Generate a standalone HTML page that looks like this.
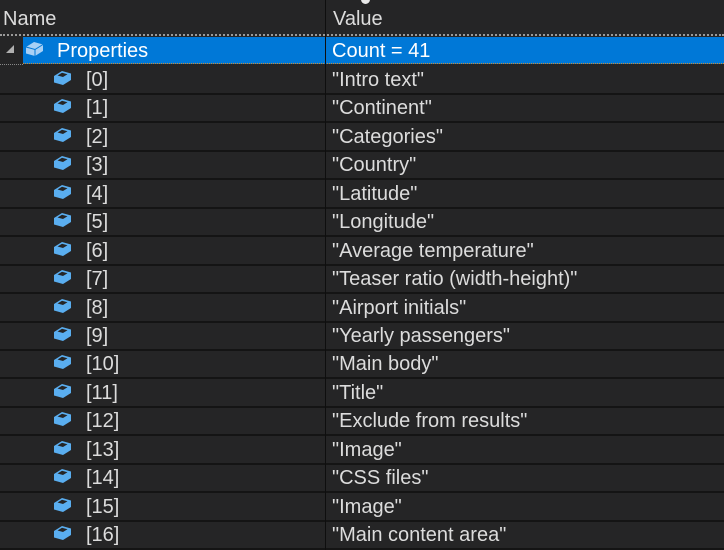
<!DOCTYPE html>
<html><head><style>
body{margin:0;width:724px;height:550px;background:#252526;overflow:hidden;position:relative;font-family:"Liberation Sans",sans-serif;font-size:20px;color:#dcdcdc}
.r{position:absolute;left:0;width:724px;height:27px;border-bottom:2px solid #141414}
.t{position:absolute;top:3px;white-space:nowrap}
.n{left:86px}.v{left:332px}
.ic{position:absolute;left:52px;top:3px}
.div{position:absolute;left:325px;top:0;width:1px;height:550px;background:#0e0e0e}
</style></head><body>
<div style="position:absolute;left:0;top:0;width:724px;height:34px;background:#252526;border-bottom:2px dotted #9a9a9a"></div>
<div class="t" style="left:3px;top:8px">Name</div>
<div class="t" style="left:333px;top:8px">Value</div>
<div style="position:absolute;left:361px;top:-5px;width:9px;height:9px;border-radius:50%;background:#e8e8e8"></div>
<div style="position:absolute;left:23px;top:37px;width:701px;height:26px;background:#0078d7;border-bottom:1px dotted #d08a30"></div>
<div style="position:absolute;left:0;top:63px;width:23px;height:1px;border-bottom:1px dotted #888"></div>
<svg style="position:absolute;left:5px;top:44px" width="10" height="10"><path d="M9 1V9H1Z" fill="#b0b0b0"/></svg>
<svg style="position:absolute;left:24px;top:40px" width="22" height="18"><path d="M2 7L10 2L19 4.5V11L11 16L2 13.5Z" fill="#a8d0f5"/><path d="M2 7L11 9.5L19 4.5" stroke="#0078d7" stroke-width="1" fill="none"/><path d="M11 9.5V16" stroke="#0078d7" fill="none"/></svg>
<div class="t" style="left:57px;top:40px;color:#fff">Properties</div>
<div class="t" style="left:332px;top:40px;color:#fff">Count = 41</div>

<div class="r" style="top:66px"><svg class="ic" width="22" height="18"><path d="M2 7L10 2L19 4.5V11L11 16L2 13.5Z" fill="#5aaef0"/><path d="M5.5 6.5L10 3.8L15.5 5.2L11 8Z" fill="#252526"/></svg><div class="t n">[0]</div><div class="t v">"Intro text"</div></div>
<div class="r" style="top:94px"><svg class="ic" width="22" height="18"><path d="M2 7L10 2L19 4.5V11L11 16L2 13.5Z" fill="#5aaef0"/><path d="M5.5 6.5L10 3.8L15.5 5.2L11 8Z" fill="#252526"/></svg><div class="t n">[1]</div><div class="t v">"Continent"</div></div>
<div class="r" style="top:123px"><svg class="ic" width="22" height="18"><path d="M2 7L10 2L19 4.5V11L11 16L2 13.5Z" fill="#5aaef0"/><path d="M5.5 6.5L10 3.8L15.5 5.2L11 8Z" fill="#252526"/></svg><div class="t n">[2]</div><div class="t v">"Categories"</div></div>
<div class="r" style="top:151px"><svg class="ic" width="22" height="18"><path d="M2 7L10 2L19 4.5V11L11 16L2 13.5Z" fill="#5aaef0"/><path d="M5.5 6.5L10 3.8L15.5 5.2L11 8Z" fill="#252526"/></svg><div class="t n">[3]</div><div class="t v">"Country"</div></div>
<div class="r" style="top:180px"><svg class="ic" width="22" height="18"><path d="M2 7L10 2L19 4.5V11L11 16L2 13.5Z" fill="#5aaef0"/><path d="M5.5 6.5L10 3.8L15.5 5.2L11 8Z" fill="#252526"/></svg><div class="t n">[4]</div><div class="t v">"Latitude"</div></div>
<div class="r" style="top:208px"><svg class="ic" width="22" height="18"><path d="M2 7L10 2L19 4.5V11L11 16L2 13.5Z" fill="#5aaef0"/><path d="M5.5 6.5L10 3.8L15.5 5.2L11 8Z" fill="#252526"/></svg><div class="t n">[5]</div><div class="t v">"Longitude"</div></div>
<div class="r" style="top:237px"><svg class="ic" width="22" height="18"><path d="M2 7L10 2L19 4.5V11L11 16L2 13.5Z" fill="#5aaef0"/><path d="M5.5 6.5L10 3.8L15.5 5.2L11 8Z" fill="#252526"/></svg><div class="t n">[6]</div><div class="t v">"Average temperature"</div></div>
<div class="r" style="top:265px"><svg class="ic" width="22" height="18"><path d="M2 7L10 2L19 4.5V11L11 16L2 13.5Z" fill="#5aaef0"/><path d="M5.5 6.5L10 3.8L15.5 5.2L11 8Z" fill="#252526"/></svg><div class="t n">[7]</div><div class="t v">"Teaser ratio (width-height)"</div></div>
<div class="r" style="top:294px"><svg class="ic" width="22" height="18"><path d="M2 7L10 2L19 4.5V11L11 16L2 13.5Z" fill="#5aaef0"/><path d="M5.5 6.5L10 3.8L15.5 5.2L11 8Z" fill="#252526"/></svg><div class="t n">[8]</div><div class="t v">"Airport initials"</div></div>
<div class="r" style="top:322px"><svg class="ic" width="22" height="18"><path d="M2 7L10 2L19 4.5V11L11 16L2 13.5Z" fill="#5aaef0"/><path d="M5.5 6.5L10 3.8L15.5 5.2L11 8Z" fill="#252526"/></svg><div class="t n">[9]</div><div class="t v">"Yearly passengers"</div></div>
<div class="r" style="top:350px"><svg class="ic" width="22" height="18"><path d="M2 7L10 2L19 4.5V11L11 16L2 13.5Z" fill="#5aaef0"/><path d="M5.5 6.5L10 3.8L15.5 5.2L11 8Z" fill="#252526"/></svg><div class="t n">[10]</div><div class="t v">"Main body"</div></div>
<div class="r" style="top:379px"><svg class="ic" width="22" height="18"><path d="M2 7L10 2L19 4.5V11L11 16L2 13.5Z" fill="#5aaef0"/><path d="M5.5 6.5L10 3.8L15.5 5.2L11 8Z" fill="#252526"/></svg><div class="t n">[11]</div><div class="t v">"Title"</div></div>
<div class="r" style="top:407px"><svg class="ic" width="22" height="18"><path d="M2 7L10 2L19 4.5V11L11 16L2 13.5Z" fill="#5aaef0"/><path d="M5.5 6.5L10 3.8L15.5 5.2L11 8Z" fill="#252526"/></svg><div class="t n">[12]</div><div class="t v">"Exclude from results"</div></div>
<div class="r" style="top:436px"><svg class="ic" width="22" height="18"><path d="M2 7L10 2L19 4.5V11L11 16L2 13.5Z" fill="#5aaef0"/><path d="M5.5 6.5L10 3.8L15.5 5.2L11 8Z" fill="#252526"/></svg><div class="t n">[13]</div><div class="t v">"Image"</div></div>
<div class="r" style="top:464px"><svg class="ic" width="22" height="18"><path d="M2 7L10 2L19 4.5V11L11 16L2 13.5Z" fill="#5aaef0"/><path d="M5.5 6.5L10 3.8L15.5 5.2L11 8Z" fill="#252526"/></svg><div class="t n">[14]</div><div class="t v">"CSS files"</div></div>
<div class="r" style="top:493px"><svg class="ic" width="22" height="18"><path d="M2 7L10 2L19 4.5V11L11 16L2 13.5Z" fill="#5aaef0"/><path d="M5.5 6.5L10 3.8L15.5 5.2L11 8Z" fill="#252526"/></svg><div class="t n">[15]</div><div class="t v">"Image"</div></div>
<div class="r" style="top:521px"><svg class="ic" width="22" height="18"><path d="M2 7L10 2L19 4.5V11L11 16L2 13.5Z" fill="#5aaef0"/><path d="M5.5 6.5L10 3.8L15.5 5.2L11 8Z" fill="#252526"/></svg><div class="t n">[16]</div><div class="t v">"Main content area"</div></div>
<div class="div"></div>
</body></html>
